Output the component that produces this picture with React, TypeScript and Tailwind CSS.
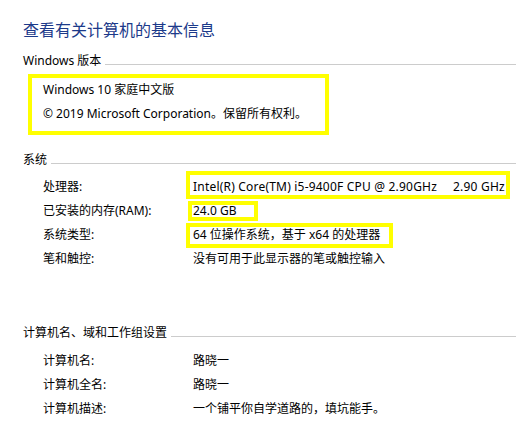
const fontStack = "font-['Noto_Sans','Noto_Sans_CJK_SC',sans-serif]";

function SectionHeader({ title, className = "" }: { title: string; className?: string }) {
  return (
    <div className={`flex h-5 items-center leading-5 ${className}`}>
      <span className="text-[12px] text-black">{title}</span>
      <div className="ml-1 mt-[6px] h-px flex-1 bg-[#cccccc]" />
    </div>
  );
}

interface RowProps {
  label: string;
  children: React.ReactNode;
  // yellow annotation box drawn over the value, if any
  box?: string;
}

function InfoRow({ label, children, box }: RowProps) {
  return (
    <div className="flex h-6 items-center pl-5 text-[12px] leading-6 text-black">
      <span className="w-[150px] shrink-0">{label}</span>
      <span className="relative inline-block h-6 whitespace-pre">
        {children}
        {box && <span className={`pointer-events-none absolute border-4 border-[#ffff00] ${box}`} />}
      </span>
    </div>
  );
}

export default function App() {
  return (
    <div className={`h-[424px] w-[516px] overflow-hidden bg-white pl-[23px] pt-5 ${fontStack}`}>
      <h1 className="h-5 text-[16px] leading-5 text-[#1c3a8a]">查看有关计算机的基本信息</h1>

      <SectionHeader title="Windows 版本" className="mt-[11px]" />
      <div className="ml-[5px] mt-[3px] w-[301px] border-4 border-[#ffff00] pb-[5px] pl-[11px] text-[12px] leading-6 text-black">
        <p>Windows 10 家庭中文版</p>
        <p>© 2019 Microsoft Corporation。保留所有权利。</p>
      </div>

      <SectionHeader title="系统" className="mt-[15px]" />
      <div className="mt-[5px]">
        <InfoRow label="处理器:" box="-left-[7px] -top-[4px] h-[28px] w-[324px]">
          <span className="tracking-[0.2px]">Intel(R) Core(TM) i5-9400F CPU @ 2.90GHz</span>
          <span className="ml-[16px] tracking-[0.2px]">2.90 GHz</span>
        </InfoRow>
        <InfoRow label="已安装的内存(RAM):" box="-left-[5px] top-[2px] h-[20px] w-[70px]">
          24.0 GB
        </InfoRow>
        <InfoRow label="系统类型:" box="-left-[7px] top-0 h-[25px] w-[207px]">
          64 位操作系统，基于 x64 的处理器
        </InfoRow>
        <InfoRow label="笔和触控:">没有可用于此显示器的笔或触控输入</InfoRow>
      </div>

      <SectionHeader title="计算机名、域和工作组设置" className="mt-[52px]" />
      <div className="mt-[6px]">
        <InfoRow label="计算机名:">路晓一</InfoRow>
        <InfoRow label="计算机全名:">路晓一</InfoRow>
        <InfoRow label="计算机描述:">一个铺平你自学道路的，填坑能手。</InfoRow>
      </div>
    </div>
  );
}
